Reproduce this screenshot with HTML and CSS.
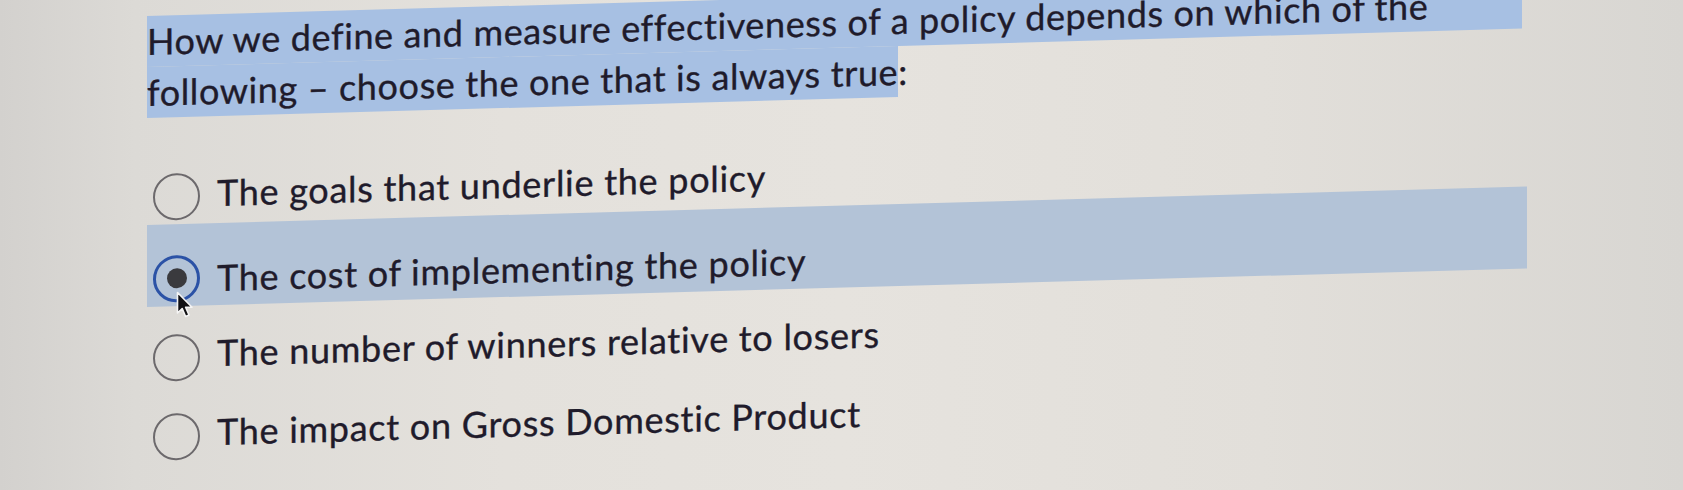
FILE: index.html
```html
<!DOCTYPE html>
<html lang="en">
<head>
<meta charset="utf-8">
<title>Policy effectiveness question</title>
<link rel="stylesheet" href="styles.css">
</head>
<body>
<div class="screen">
  <div class="content">
    <div class="question">
      <span class="q-line q-line-full">How we define and measure effectiveness of a policy depends on which of the</span><span class="q-line q-line-part">following – choose the one that is always true</span>:
    </div>
    <div class="options">
      <div class="option option-first">
        <span class="radio"></span>
        <span class="label">The goals that underlie the policy</span>
      </div>
      <div class="option option-selected">
        <span class="radio radio-checked"><span class="dot"></span></span>
        <span class="label">The cost of implementing the policy</span>
      </div>
      <div class="option option-gap">
        <span class="radio"></span>
        <span class="label">The number of winners relative to losers</span>
      </div>
      <div class="option option-gap">
        <span class="radio"></span>
        <span class="label">The impact on Gross Domestic Product</span>
      </div>
    </div>
  </div>
  <svg class="cursor" width="18" height="28" viewBox="0 0 18 28" aria-hidden="true">
    <path d="M1.5 1.5 L1.5 22 L6.2 17.6 L9.6 25.5 L13 24 L9.6 16.3 L16 16.3 Z" fill="#111114" stroke="#f4f4f4" stroke-width="1.6" stroke-linejoin="round"/>
  </svg>
</div>
</body>
</html>
```
FILE: styles.css
```css
html, body {
  margin: 0;
  padding: 0;
}

body {
  width: 1683px;
  height: 490px;
  overflow: hidden;
  background: linear-gradient(90deg, #d3d1ce 0%, #dcdad6 8%, #e4e1dc 30%, #e6e3de 50%, #e2dfda 75%, #d8d6d2 100%);
  font-family: "Lato", "Liberation Sans", sans-serif;
  color: #1f1b2b;
  font-variant-ligatures: none;
}

.screen {
  position: relative;
  width: 1683px;
  height: 490px;
}

.content {
  width: 1380px;
  padding: 16px 0 0 147px;
  transform: skewY(-1.6deg);
  transform-origin: 147px 250px;
}

.question {
  font-size: 36px;
  line-height: 51px;
  letter-spacing: 0.62px;
  -webkit-text-stroke: 0.35px #1f1b2b;
}

.q-line {
  background: #a7c0e3;
}

.q-line-full {
  display: block;
  width: 1375px;
  white-space: nowrap;
}

.q-line-part {
  display: inline-block;
}

.options {
  display: flex;
  flex-direction: column;
  margin-top: 52px;
  width: 1380px;
}

.option {
  display: flex;
  align-items: center;
  height: 56px;
}

.option-first {
  height: 55px;
}

.option-selected {
  height: 56px;
  padding-top: 26px;
  background: #b3c3d7;
}

.option-gap {
  margin-top: 23px;
}

.radio {
  box-sizing: border-box;
  flex: none;
  width: 47px;
  height: 47px;
  margin-left: 6px;
  border: 2.5px solid #6c696c;
  border-radius: 50%;
  display: flex;
  align-items: center;
  justify-content: center;
}

.radio-checked {
  border: 3.5px solid #2b52a6;
}

.dot {
  width: 20px;
  height: 20px;
  border-radius: 50%;
  background: #3a3a3e;
}

.label {
  margin-left: 17px;
  font-size: 36px;
  line-height: 42px;
  letter-spacing: 0.72px;
  padding-bottom: 8px;
  -webkit-text-stroke: 0.35px #1f1b2b;
}

.option-selected .label {
  padding-bottom: 0;
}

.cursor {
  position: absolute;
  left: 176px;
  top: 291px;
}
```
